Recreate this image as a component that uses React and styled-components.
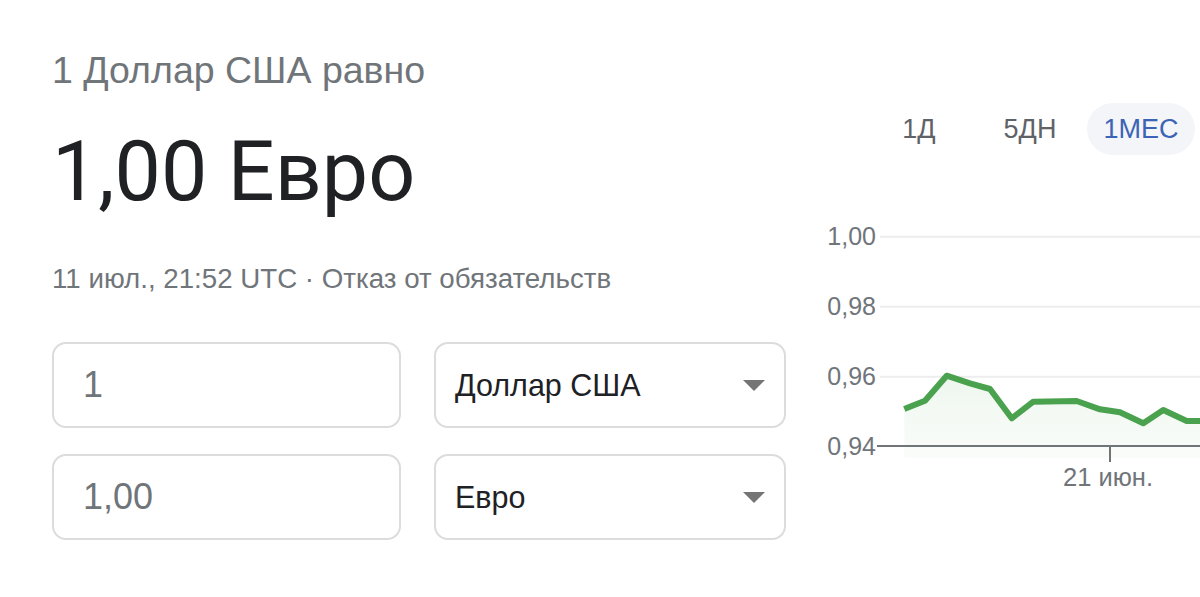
import React from "react";
import styled, { createGlobalStyle } from "styled-components";

const GlobalStyle = createGlobalStyle`
  html, body {
    margin: 0;
    padding: 0;
    background: #ffffff;
    overflow: hidden;
  }
  body {
    font-family: "Liberation Sans", Arial, sans-serif;
  }
`;

const points = [
  [89.3, 194],
  [110, 185.7],
  [131.7, 160.7],
  [155, 168.3],
  [175, 174],
  [196.7, 203.3],
  [218.3, 186.7],
  [261.7, 186],
  [285, 194.3],
  [305, 197.3],
  [328.3, 208.3],
  [348.3, 195],
  [371.7, 206],
  [400, 206]
];

const yTicks = [
  { label: "1,00", text: 30, line: 21.7 },
  { label: "0,98", text: 100, line: 91.7 },
  { label: "0,96", text: 170, line: 161.7 }
];

const labelFont = "Liberation Sans, Arial, sans-serif";

const App = () => {
  const linePath = points.map((p, i) => `${i ? "L" : "M"}${p[0]} ${p[1]}`).join(" ");
  const areaPath = `${linePath} L400 243 L89.3 243 Z`;

  return (
    <Page>
      <GlobalStyle />
      <Converter>
        <Heading>1 Доллар США равно</Heading>
        <Result>1,00 Евро</Result>
        <Timestamp>11 июл., 21:52 UTC · Отказ от обязательств</Timestamp>
        <Fields>
          <AmountBox>1</AmountBox>
          <SelectBox>
            Доллар США
            <Caret />
          </SelectBox>
          <AmountBox>1,00</AmountBox>
          <SelectBox>
            Евро
            <Caret />
          </SelectBox>
        </Fields>
      </Converter>

      <ChartPanel>
        <Tabs>
          <Tab>1Д</Tab>
          <Tab>5ДН</Tab>
          <Tab active>1МЕС</Tab>
        </Tabs>
        <Chart width="385" height="285" viewBox="0 0 385 285">
          <defs>
            <linearGradient id="fill" x1="0" y1="0" x2="0" y2="1">
              <stop offset="0" stopColor="#4aa24e" stopOpacity="0.09" />
              <stop offset="1" stopColor="#4aa24e" stopOpacity="0.03" />
            </linearGradient>
          </defs>
          {yTicks.map(t => (
            <g key={t.label}>
              <line x1="65" x2="385" y1={t.line} y2={t.line} stroke="#ededed" strokeWidth="2" />
              <text x="61" y={t.text} textAnchor="end" fill="#70757a" fontSize="25" fontFamily={labelFont}>
                {t.label}
              </text>
            </g>
          ))}
          <path d={areaPath} fill="url(#fill)" />
          <path d={linePath} fill="none" stroke="#4aa24e" strokeWidth="6" strokeLinejoin="round" />
          <line x1="62" x2="385" y1="231" y2="231" stroke="#70757a" strokeWidth="2" />
          <text x="61" y="240" textAnchor="end" fill="#70757a" fontSize="25" fontFamily={labelFont}>
            0,94
          </text>
          <line x1="295" x2="295" y1="231" y2="247" stroke="#70757a" strokeWidth="2" />
          <text x="293" y="271" textAnchor="middle" fill="#70757a" fontSize="25.5" fontFamily={labelFont}>
            21 июн.
          </text>
        </Chart>
      </ChartPanel>
    </Page>
  );
};

const Page = styled.div`
  display: flex;
  width: 1200px;
  height: 597px;
  overflow: hidden;
`;

const Converter = styled.div`
  width: 734px;
  padding-left: 52px;
  margin-right: 29px;
  display: flex;
  flex-direction: column;
`;

const Heading = styled.div`
  margin-top: 50px;
  font-size: 37.5px;
  line-height: 40px;
  color: #70757a;
`;

const Result = styled.div`
  margin-top: 34px;
  font-family: Roboto, "Liberation Sans", sans-serif;
  font-size: 82.5px;
  line-height: 96px;
  color: #202124;
`;

const Timestamp = styled.div`
  margin-top: 43px;
  font-size: 27.7px;
  line-height: 32px;
  color: #70757a;
`;

const Fields = styled.div`
  margin-top: 47px;
  display: grid;
  grid-template-columns: 349px 352px;
  grid-auto-rows: 86px;
  column-gap: 33px;
  row-gap: 26px;
`;

const Box = styled.div`
  box-sizing: border-box;
  display: flex;
  align-items: center;
  border: 2px solid #dcdcdc;
  border-radius: 14px;
  background: #ffffff;
`;

const AmountBox = styled(Box)`
  padding-left: 29px;
  font-size: 36px;
  color: #70757a;
`;

const SelectBox = styled(Box)`
  justify-content: space-between;
  padding: 0 19px 0 19px;
  font-size: 30.5px;
  color: #202124;
`;

const Caret = styled.span`
  width: 0;
  height: 0;
  border-left: 11px solid transparent;
  border-right: 11px solid transparent;
  border-top: 11px solid #757575;
`;

const ChartPanel = styled.div`
  width: 385px;
  display: flex;
  flex-direction: column;
`;

const Tabs = styled.div`
  margin-top: 103px;
  margin-left: 50px;
  display: grid;
  grid-template-columns: 108px 108px 108px;
  column-gap: 3px;
`;

const Tab = styled.div`
  height: 52px;
  border-radius: 26px;
  display: flex;
  align-items: center;
  justify-content: center;
  font-size: 27px;
  color: ${p => (p.active ? "#3c63b6" : "#5f6368")};
  background: ${p => (p.active ? "#f3f5f8" : "transparent")};
`;

const Chart = styled.svg`
  display: block;
  margin-top: 60px;
  overflow: visible;
`;

export default App;
